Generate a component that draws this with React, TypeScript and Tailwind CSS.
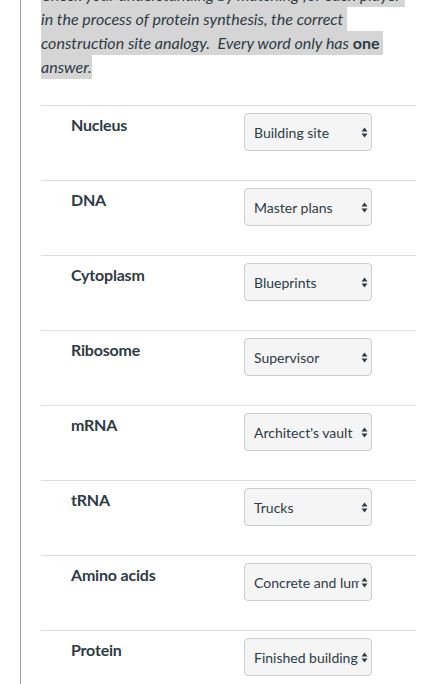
import React from "react";

const rows: [string, string][] = [
  ["Nucleus", "Building site"],
  ["DNA", "Master plans"],
  ["Cytoplasm", "Blueprints"],
  ["Ribosome", "Supervisor"],
  ["mRNA", "Architect's vault"],
  ["tRNA", "Trucks"],
  ["Amino acids", "Concrete and lumber"],
  ["Protein", "Finished building"],
];

function Arrows() {
  return (
    <svg width="7" height="11" viewBox="0 0 7 11" className="shrink-0">
      <path d="M3.5 0.5 L6.5 4.5 L0.5 4.5 Z" fill="#2d3b45" />
      <path d="M3.5 10.5 L6.5 6.5 L0.5 6.5 Z" fill="#2d3b45" />
    </svg>
  );
}

export default function App() {
  return (
    <div
      className="w-[428px] h-[684px] overflow-hidden bg-white text-[#2d3b45]"
      style={{ fontFamily: "Lato, 'Noto Sans', sans-serif" }}
    >
      <div className="ml-5 border-l border-[#9a9a9a] h-full pl-5 pr-3 flex flex-col">
        <div className="-mt-[17px] text-[16px] leading-[24px] italic pb-[26px] flex flex-col">
          <span className="bg-[#d5d5d5] w-fit whitespace-nowrap pr-[4px]">Check your understanding by matching for each player</span>
          <span className="bg-[#d5d5d5] w-fit whitespace-nowrap pr-[4px]">in the process of protein synthesis, the correct</span>
          <span className="bg-[#d5d5d5] w-fit whitespace-nowrap pr-[4px]">
            construction site analogy.&nbsp; Every word only has <b className="font-bold not-italic">one</b>
          </span>
          <span className="bg-[#d5d5d5] w-fit whitespace-nowrap">answer.</span>
        </div>
        {rows.map(([label, value]) => (
          <div key={label} className="flex shrink-0 border-t border-[#dcdfe2] h-[75px] pl-[30px]">
            <div className="w-[173px] pt-[9px] text-[16px] leading-[20px] font-bold tracking-[-0.2px]">{label}</div>
            <div className="pt-[7px]">
              <div className="w-[128px] h-[38px] rounded-[4px] border border-[#c7cdd1] bg-[#f5f5f5] flex items-center pl-[9px] pr-[3px] gap-[2px]">
                <span className="flex-1 min-w-0 overflow-hidden whitespace-nowrap text-[14px]">{value}</span>
                <Arrows />
              </div>
            </div>
          </div>
        ))}
      </div>
    </div>
  );
}
